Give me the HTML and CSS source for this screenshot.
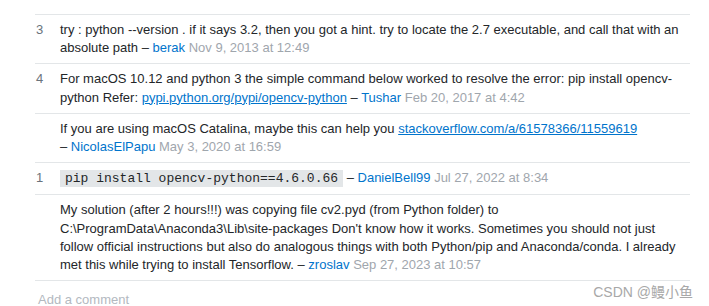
FILE: index.html
```html
<!DOCTYPE html>
<html lang="en">
<head>
    <meta charset="UTF-8">
    <meta name="viewport" content="width=device-width, initial-scale=1.0">
    <title>Comments</title>
    <link rel="stylesheet" href="styles.css">
</head>
<body>
    <ul class="comments">
        <li class="comment">
            <div class="score">3</div>
            <div class="body">try : python --version . if it says 3.2, then you got a hint. try to locate the 2.7 executable, and call that with an absolute path – <a class="user" href="#">berak</a> <span class="date">Nov 9, 2013 at 12:49</span></div>
        </li>
        <li class="comment">
            <div class="score">4</div>
            <div class="body">For macOS 10.12 and python 3 the simple command below worked to resolve the error: pip install opencv-python Refer: <a class="ext" href="#">pypi.python.org/pypi/opencv-python</a> – <a class="user" href="#">Tushar</a> <span class="date">Feb 20, 2017 at 4:42</span></div>
        </li>
        <li class="comment">
            <div class="score"></div>
            <div class="body">If you are using macOS Catalina, maybe this can help you <a class="ext" href="#">stackoverflow.com/a/61578366/11559619</a><br>– <a class="user" href="#">NicolasElPapu</a> <span class="date">May 3, 2020 at 16:59</span></div>
        </li>
        <li class="comment">
            <div class="score">1</div>
            <div class="body"><code>pip install opencv-python==4.6.0.66</code> – <a class="user" href="#">DanielBell99</a> <span class="date">Jul 27, 2022 at 8:34</span></div>
        </li>
        <li class="comment">
            <div class="score"></div>
            <div class="body">My solution (after 2 hours!!!) was copying file cv2.pyd (from Python folder) to C:\ProgramData\Anaconda3\Lib\site-packages Don't know how it works. Sometimes you should not just follow official instructions but also do analogous things with both Python/pip and Anaconda/conda. I already met this while trying to install Tensorflow. – <a class="user" href="#">zroslav</a> <span class="date">Sep 27, 2023 at 10:57</span></div>
        </li>
    </ul>
    <div class="add-comment">Add a comment</div>
    <div class="watermark">CSDN @鳗小鱼</div>
</body>
</html>
```

FILE: styles.css
```css
body {
    margin: 0;
    padding: 14px 19px 0 35px;
    font-family: "Liberation Sans", Arial, "Noto Sans CJK SC", sans-serif;
    font-size: 13px;
    color: #232629;
    background: #fff;
    overflow: hidden;
}
.comments {
    list-style: none;
    margin: 0;
    padding: 0;
    border-top: 1px solid #e3e6e8;
}
.comment {
    display: flex;
    border-bottom: 1px solid #e3e6e8;
    padding: 6px 0;
    line-height: 18.2px;
}
.score {
    width: 24px;
    flex-shrink: 0;
    padding-left: 1px;
    color: #6a737c;
}
.body {
    flex: 1;
    padding-right: 4px;
}
a { color: #0074cc; text-decoration: none; }
a.ext { text-decoration: underline; }
.date { color: #9fa6ad; }
code {
    font-family: "Liberation Mono", "Courier New", monospace;
    font-size: 13px;
    background: #e3e6e8;
    padding: 1px 5px;
}
.add-comment {
    padding: 11px 3px;
    color: #b3b9bf;
}
.watermark {
    position: absolute;
    right: 16px;
    top: 281px;
    font-size: 14px;
    color: #a8a8a8;
    text-shadow: 0 0 2px #fff;
}
```
